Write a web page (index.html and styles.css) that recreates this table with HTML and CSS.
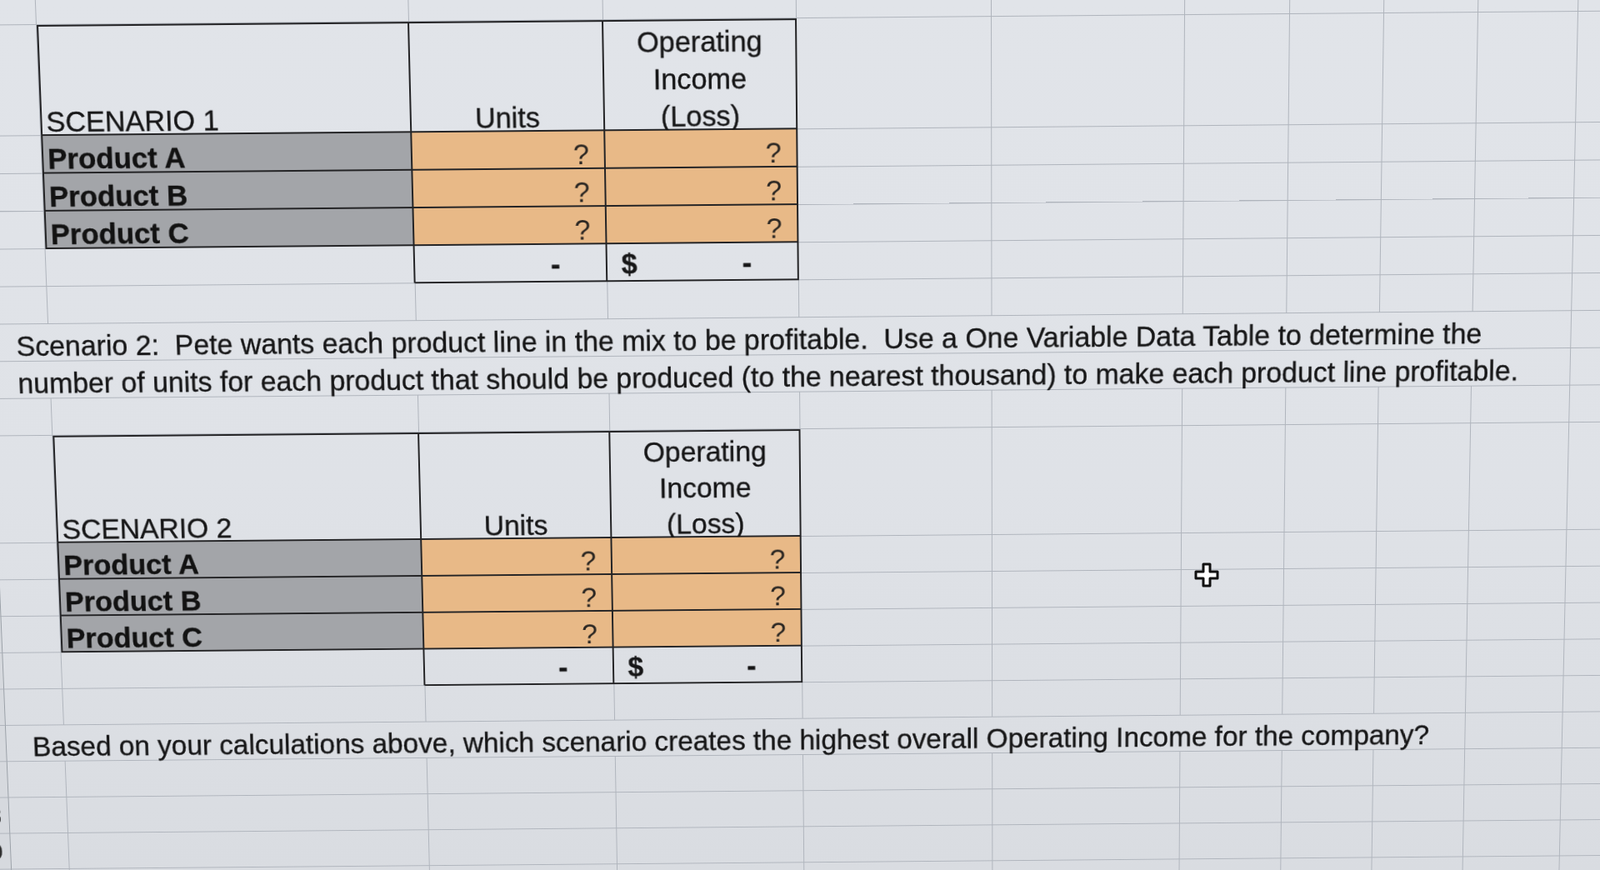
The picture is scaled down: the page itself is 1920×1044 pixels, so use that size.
FILE: index.html
```html
<!DOCTYPE html>
<html lang="en">
<head>
<meta charset="utf-8">
<title>Scenario worksheet</title>
<link rel="stylesheet" href="styles.css">
</head>
<body>
<div class="screen">
  <div class="sheet">
    <!-- row 20 -->
    <div class="rh"></div><div class="c"></div><div class="c"></div><div class="c"></div><div class="c"></div><div class="c"></div><div class="c"></div><div class="c"></div><div class="c"></div><div class="c"></div><div class="c"></div><div class="c"></div>
    <!-- row 21 : table 1 starts -->
    <div class="rh"></div><div class="c"></div>
    <div class="tbl">
      <div class="th th-label"><span>SCENARIO 1</span></div>
      <div class="th th-center"><span>Units</span></div>
      <div class="th th-center"><span>Operating<br>Income<br>(Loss)</span></div>
      <div class="prod">Product A</div><div class="val">?</div><div class="val">?</div>
      <div class="prod">Product B</div><div class="val">?</div><div class="val">?</div>
      <div class="prod">Product C</div><div class="val">?</div><div class="val">?</div>
      <div class="tot-blank"></div>
      <div class="tot"><span class="dash">-</span></div>
      <div class="tot tot-end"><span>$</span><span class="dash">-</span></div>
    </div>
    <div class="c"></div><div class="c"></div><div class="c"></div><div class="c"></div><div class="c"></div><div class="c"></div><div class="c"></div>
    <!-- rows 22-25 -->
    <div class="rh"></div><div class="c"></div><div class="c"></div><div class="c"></div><div class="c"></div><div class="c"></div><div class="c"></div><div class="c"></div><div class="c"></div>
    <div class="rh"></div><div class="c"></div><div class="c"></div><div class="c"></div><div class="c"></div><div class="c"></div><div class="c"></div><div class="c"></div><div class="c"></div>
    <div class="rh"></div><div class="c"></div><div class="c"></div><div class="c"></div><div class="c"></div><div class="c"></div><div class="c"></div><div class="c"></div><div class="c"></div>
    <div class="rh"></div><div class="c"></div><div class="c"></div><div class="c"></div><div class="c"></div><div class="c"></div><div class="c"></div><div class="c"></div><div class="c"></div>
    <!-- row 26 -->
    <div class="rh"></div><div class="c"></div><div class="c"></div><div class="c"></div><div class="c"></div><div class="c"></div><div class="c"></div><div class="c"></div><div class="c"></div><div class="c"></div><div class="c"></div><div class="c"></div>
    <!-- rows 27-28 : scenario 2 text -->
    <div class="rh"></div><div class="txt">Scenario 2:  Pete wants each product line in the mix to be profitable.  Use a One Variable Data Table to determine the</div><div class="c"></div>
    <div class="rh"></div><div class="txt">number of units for each product that should be produced (to the nearest thousand) to make each product line profitable.</div><div class="c"></div>
    <!-- row 29 -->
    <div class="rh"></div><div class="c"></div><div class="c"></div><div class="c"></div><div class="c"></div><div class="c"></div><div class="c"></div><div class="c"></div><div class="c"></div><div class="c"></div><div class="c"></div><div class="c"></div>
    <!-- row 30 : table 2 starts -->
    <div class="rh"></div><div class="c"></div>
    <div class="tbl">
      <div class="th th-label"><span>SCENARIO 2</span></div>
      <div class="th th-center"><span>Units</span></div>
      <div class="th th-center"><span>Operating<br>Income<br>(Loss)</span></div>
      <div class="prod">Product A</div><div class="val">?</div><div class="val">?</div>
      <div class="prod">Product B</div><div class="val">?</div><div class="val">?</div>
      <div class="prod">Product C</div><div class="val">?</div><div class="val">?</div>
      <div class="tot-blank"></div>
      <div class="tot"><span class="dash">-</span></div>
      <div class="tot tot-end"><span>$</span><span class="dash">-</span></div>
    </div>
    <div class="c"></div><div class="c"></div><div class="c"></div><div class="c"></div><div class="c"></div><div class="c"></div><div class="c"></div>
    <!-- rows 31-34 -->
    <div class="rh"></div><div class="c"></div><div class="c"></div><div class="c"></div><div class="c"></div><div class="c"></div><div class="c"></div><div class="c"></div><div class="c"></div>
    <div class="rh"></div><div class="c"></div><div class="c"></div><div class="c"></div><div class="c"></div><div class="c"></div><div class="c"></div><div class="c"></div><div class="c"></div>
    <div class="rh"></div><div class="c"></div><div class="c"></div><div class="c"></div><div class="c"></div><div class="c"></div><div class="c"></div><div class="c"></div><div class="c"></div>
    <div class="rh"></div><div class="c"></div><div class="c"></div><div class="c"></div><div class="c"></div><div class="c"></div><div class="c"></div><div class="c"></div><div class="c"></div>
    <!-- row 35 -->
    <div class="rh"></div><div class="c"></div><div class="c"></div><div class="c"></div><div class="c"></div><div class="c"></div><div class="c"></div><div class="c"></div><div class="c"></div><div class="c"></div><div class="c"></div><div class="c"></div>
    <!-- row 36 : question -->
    <div class="rh"></div><div class="txt txt-short">Based on your calculations above, which scenario creates the highest overall Operating Income for the company?</div><div class="c"></div><div class="c"></div>
    <!-- rows 37-41 -->
    <div class="rh">37</div><div class="c"></div><div class="c"></div><div class="c"></div><div class="c"></div><div class="c"></div><div class="c"></div><div class="c"></div><div class="c"></div><div class="c"></div><div class="c"></div><div class="c"></div>
    <div class="rh">38</div><div class="c"></div><div class="c"></div><div class="c"></div><div class="c"></div><div class="c"></div><div class="c"></div><div class="c"></div><div class="c"></div><div class="c"></div><div class="c"></div><div class="c"></div>
    <div class="rh">39</div><div class="c"></div><div class="c"></div><div class="c"></div><div class="c"></div><div class="c"></div><div class="c"></div><div class="c"></div><div class="c"></div><div class="c"></div><div class="c"></div><div class="c"></div>
    <div class="rh"></div><div class="c"></div><div class="c"></div><div class="c"></div><div class="c"></div><div class="c"></div><div class="c"></div><div class="c"></div><div class="c"></div><div class="c"></div><div class="c"></div><div class="c"></div>
    <div class="rh"></div><div class="c"></div><div class="c"></div><div class="c"></div><div class="c"></div><div class="c"></div><div class="c"></div><div class="c"></div><div class="c"></div><div class="c"></div><div class="c"></div><div class="c"></div>
  </div>

  <svg class="cursor" width="30" height="30" viewBox="0 0 30 30" aria-hidden="true">
    <path d="M11 2 H19 V11 H28 V19 H19 V28 H11 V19 H2 V11 H11 Z" fill="#ffffff" stroke="#111111" stroke-width="3" stroke-linejoin="round"/>
  </svg>
</div>
</body>
</html>
```

FILE: styles.css
```css
:root {
  --bg: #dfe2e7;
  --grid: #afb4bc;
  --dark: #232325;
  --orange: #e8b987;
  --gray: #a3a5a9;
  --ink: #161617;
}

html, body {
  margin: 0;
  padding: 0;
  background: var(--bg);
}

.screen {
  position: relative;
  width: 1920px;
  height: 1044px;
  overflow: hidden;
  background: linear-gradient(180deg, #e1e4e9 0%, #dfe2e7 55%, #d9dce1 100%);
}

/* spreadsheet grid, photographed slightly in perspective */
.sheet {
  display: grid;
  grid-template-columns: 52px 72px 447px 233px 232px 234px 232px 126px 113px 113px 120px 240px;
  grid-template-rows: 30px 134px repeat(8, 46px) 134px repeat(11, 46px);
  width: max-content;
  margin-left: -80px;
  transform-origin: 80px 0;
  transform: matrix3d(1.001, -0.00865, 0, 0,
                      0.0406, 1, 0, 0.000033,
                      0, 0, 1, 0,
                      -1.22, 0.41, 0, 1);
  font-family: "Liberation Sans", Arial, sans-serif;
  font-size: 34.3px;
  color: var(--ink);
  -webkit-text-stroke: 0.35px currentColor;
}

.sheet > div {
  box-sizing: border-box;
  min-width: 0;
}

.c {
  border-right: 1px solid var(--grid);
  border-bottom: 1px solid var(--grid);
}

.rh {
  background: #d6d9de;
  border-right: 1px solid #9aa0a7;
  border-bottom: 1px solid var(--grid);
  display: flex;
  align-items: center;
  justify-content: center;
  font-size: 30px;
  color: #2a2a2a;
}

.txt {
  grid-column: 2 / span 10;
  border-right: 1px solid var(--grid);
  border-bottom: 1px solid var(--grid);
  display: flex;
  align-items: flex-end;
  padding-left: 32px;
  line-height: 36px;
  white-space: pre;
}

.txt-short {
  grid-column: 2 / span 9;
}

/* scenario tables */
.tbl {
  grid-column: 3 / span 3;
  grid-row: span 5;
  display: grid;
  grid-template-columns: 447px 233px 232px;
  grid-template-rows: 134px repeat(4, 46px);
}

.tbl > div {
  box-sizing: border-box;
  min-width: 0;
}

.th {
  border-top: 2px solid var(--dark);
  border-right: 2px solid var(--dark);
  border-bottom: 2px solid var(--dark);
  display: flex;
  align-items: flex-end;
  line-height: 45px;
}

.th span {
  margin-bottom: -8px;
}

.th-label {
  border-left: 2px solid var(--dark);
  padding-left: 5px;
}

.th-center {
  justify-content: center;
  text-align: center;
}

.prod {
  background: var(--gray);
  border-left: 2px solid var(--dark);
  border-right: 2px solid var(--dark);
  border-bottom: 2px solid var(--dark);
  display: flex;
  align-items: flex-end;
  padding-left: 5px;
  font-weight: bold;
  font-size: 35px;
  line-height: 32px;
  color: #121212;
}

.val {
  background: var(--orange);
  border-right: 2px solid var(--dark);
  border-bottom: 2px solid var(--dark);
  display: flex;
  align-items: flex-end;
  justify-content: flex-end;
  padding-right: 18px;
  line-height: 32px;
  color: #2a2622;
  -webkit-text-stroke: 0;
}

.tot-blank {
  border-right: 2px solid var(--dark);
  border-bottom: 1px solid var(--grid);
}

.tot {
  border-right: 2px solid var(--dark);
  border-bottom: 2px solid var(--dark);
  display: flex;
  align-items: flex-end;
  justify-content: flex-end;
  padding: 0 55px 4px 17px;
  font-weight: bold;
  line-height: 32px;
}

.tot-end {
  justify-content: space-between;
}

.cursor {
  position: absolute;
  left: 1433px;
  top: 675px;
}
```
